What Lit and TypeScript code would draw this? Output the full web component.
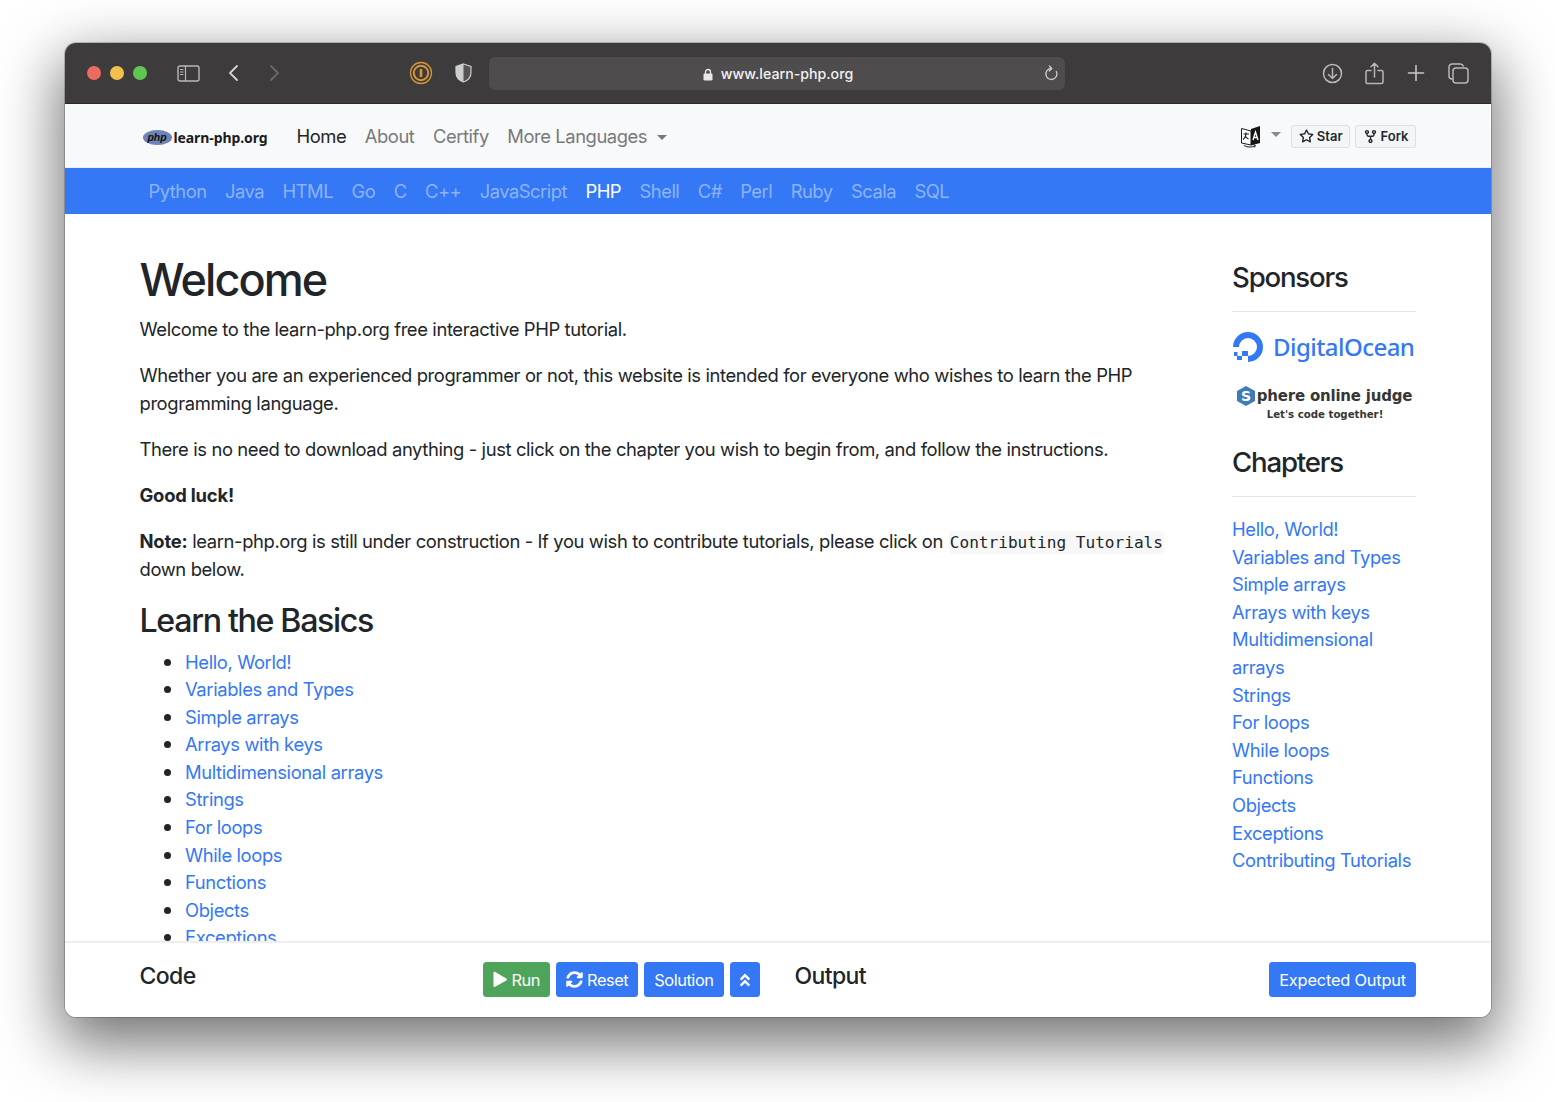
import { LitElement, html, css, svg } from "lit";
import { customElement } from "lit/decorators.js";

const langs = ["Python","Java","HTML","Go","C","C++","JavaScript","PHP","Shell","C#","Perl","Ruby","Scala","SQL"];
const basics = ["Hello, World!","Variables and Types","Simple arrays","Arrays with keys","Multidimensional arrays","Strings","For loops","While loops","Functions","Objects","Exceptions"];
const chapters = ["Hello, World!","Variables and Types","Simple arrays","Arrays with keys","Multidimensional arrays","Strings","For loops","While loops","Functions","Objects","Exceptions","Contributing Tutorials"];

@customElement("app-root")
export class AppRoot extends LitElement {
  static styles = css`
    :host { display: block; width: 1555px; height: 1102px; background: #fff; overflow: hidden;
      font-family: Inter, "Liberation Sans", sans-serif; font-size: 18.4px; line-height: 27.6px; color: #212529; letter-spacing: -0.38px; }
    * { box-sizing: border-box; }
    .stage { padding: 43px 64px 85px 64.5px; height: 1102px; }
    .win { height: 974px; border-radius: 11px; overflow: hidden; display: flex; flex-direction: column; background: #fff;
      box-shadow: 0 22px 60px 6px rgba(0,0,0,.55), 0 0 0 1px rgba(0,0,0,.2); }
    .chrome { flex: none; height: 61px; background: #3d3b3c; display: flex; align-items: center; position: relative; border-bottom: 1px solid #2a292a; }
    .chrome svg { display: block; flex: none; }
    .dots { display: flex; gap: 9px; margin-left: 22px; }
    .dot { width: 14px; height: 14px; border-radius: 50%; }
    .r { background: #ed6a5e; } .y { background: #f5bf4f; } .g { background: #61c554; }
    .side { margin-left: 30px; }
    .back { margin-left: 27px; }
    .fwd { margin-left: 30px; }
    .onep { margin-left: 128px; }
    .shield { margin-left: 22px; }
    .addr { margin-left: 17px; width: 576px; height: 33px; border-radius: 6px; background: #4e4c4d; display: flex; align-items: center; justify-content: center; position: relative;
      color: #f2f2f2; font-size: 14.2px; font-weight: 500; gap: 8px; letter-spacing: 0; padding: 2px 0 0 3px; }
    .reload { position: absolute; right: 6px; top: 8px; }
    .tools { margin-left: auto; display: flex; align-items: center; gap: 22px; margin-right: 22px; }
    .nav { flex: none; height: 64px; background: #f8f9fa; display: flex; align-items: center; padding: 2px 75px 0 78px; border-bottom: 1px solid #e8eef8; letter-spacing: -0.44px; }
    .brand { display: flex; align-items: center; gap: 2px; width: 154px; margin-top: 2px; }
    .oval { width: 29px; height: 15px; border-radius: 50%; background: #6f83b6; color: #111; font-size: 10.5px; font-style: italic; font-weight: 600; line-height: 15px; text-align: center; letter-spacing: 0; font-family: "Liberation Sans", sans-serif; }
    .bname { font-family: "Noto Sans", sans-serif; font-weight: 700; font-size: 14px; letter-spacing: -0.1px; color: #1b1b1b; line-height: 20px; }
    .nl { color: #78797a; margin-right: 18.5px; white-space: nowrap; }
    .nl.on { color: #262626; }
    .caret { display: inline-block; width: 0; height: 0; border-left: 5.5px solid transparent; border-right: 5.5px solid transparent; border-top: 5.5px solid #78797a; margin-left: 10px; vertical-align: 3px; }
    .navr { margin-left: auto; display: flex; align-items: center; margin-top: -1px; }
    .navr .caret { margin: -3px 10px 0 9px; border-top-color: #8a8b8c; }
    .gh { height: 23px; display: flex; align-items: center; gap: 3px; padding: 0 6.5px; font-size: 13px; font-weight: 600; letter-spacing: 0; line-height: 1; color: #24292e; background: #f4f5f7; border: 1px solid #dcdfe3; border-radius: 3px; }
    .gh + .gh { margin-left: 5px; }
    .langs { flex: none; height: 46px; background: #3478f6; display: flex; align-items: center; padding: 1px 0 0 84px; gap: 18.4px; color: #8cb4fb; letter-spacing: -0.5px; }
    .langs .on { color: #fff; }
    .body { flex: 1; min-height: 0; overflow: hidden; display: grid; grid-template-columns: 1fr 184px; column-gap: 64px; padding: 0 75px; align-items: start; }
    h1 { font-size: 45px; line-height: 55.2px; font-weight: 500; margin: 38px 0 9px; letter-spacing: -1.9px; }
    p { margin: 0 0 18.4px; }
    b { font-weight: 700; letter-spacing: -0.2px; }
    code { font-family: "DejaVu Sans Mono", monospace; font-size: 16.1px; background: #f7f7f7; border-radius: 3px; padding: 2px 1px; letter-spacing: 0; margin-left: 1px; }
    h3 { font-size: 32.2px; line-height: 38.6px; font-weight: 500; margin: 0 0 7.6px; letter-spacing: -1.35px; }
    ul { margin: 0; padding: 0 0 0 45.5px; list-style: disc; }
    li::marker { font-family: "DejaVu Sans", sans-serif; font-size: 1.3em; line-height: 1; }
    a { color: #3478f6; text-decoration: none; }
    h4 { font-size: 27.6px; line-height: 33px; font-weight: 500; margin: 0; letter-spacing: -1.2px; }
    aside { padding-top: 47px; }
    hr { border: 0; border-top: 1px solid #e4e4e4; margin: 17px 0 0; }
    .do { display: flex; align-items: center; gap: 9px; margin: 17px 0 0; color: #3478f6; font-size: 24px; line-height: 36px; font-weight: 500; letter-spacing: -0.55px; font-family: "Noto Sans", sans-serif; white-space: nowrap; }
    .do svg { flex: none; }
    .soj { margin: 20px 0 0 2px; text-align: center; width: 180px; font-family: "DejaVu Sans", sans-serif; color: #363636; letter-spacing: 0; white-space: nowrap; }
    .soj1 { display: flex; align-items: center; justify-content: center; font-weight: 700; font-size: 15px; line-height: 22px; letter-spacing: -0.2px; }
    .soj1 svg { flex: none; margin-right: 1px; }
    .soj2 { font-weight: 700; font-size: 10.2px; line-height: 14px; margin: 1px 0 0 2px; }
    .chap { margin: 19px 0 0; padding: 0; list-style: none; }
    .h-ch { margin-top: 24px; }
    .foot { flex: none; height: 76px; border-top: 2px solid #eeeeee; background: #fff; display: grid; grid-template-columns: 655px 1fr; padding: 0 75px; }
    .fl, .fr { display: flex; align-items: flex-start; padding-top: 18px; }
    .foot h4 { font-size: 23px; letter-spacing: -0.6px; line-height: 30px; }
    .btns { display: flex; gap: 6px; margin-left: auto; padding-top: 1px; margin-right: 35px; }
    .btn { height: 35px; border-radius: 3.5px; background: #3478f6; color: #fff; display: flex; align-items: center; gap: 4px; padding: 2px 10px 0; font-size: 16.4px; letter-spacing: -0.45px; white-space: nowrap; }
    .btn.grn { background: #4fa45b; }
    .btn svg { display: block; flex: none; margin-top: -2px; }
    .fr .btn { margin-left: auto; margin-top: 1px; letter-spacing: -0.2px; }
  `;

  private stroke(w: number, h: number, d: unknown, color = "#c9c8c8", sw = 1.6) {
    return html`<svg width=${w} height=${h} viewBox="0 0 ${w} ${h}" fill="none" stroke=${color} stroke-width=${sw} stroke-linecap="round" stroke-linejoin="round">${d}</svg>`;
  }

  render() {
    return html`
    <div class="stage"><div class="win">
      <div class="chrome">
        <div class="dots"><div class="dot r"></div><div class="dot y"></div><div class="dot g"></div></div>
        <div class="side">${this.stroke(23, 17, svg`<rect x="1" y="1" width="21" height="15" rx="2"/><path d="M8.5 1v15M3.5 4.5h2.5M3.5 7h2.5M3.5 9.5h2.5" stroke-width="1.2"/>`, "#b9b8b8", 1.4)}</div>
        <div class="back">${this.stroke(12, 18, svg`<path d="M10 2 3 9l7 7"/>`, "#d4d3d3", 1.8)}</div>
        <div class="fwd">${this.stroke(12, 18, svg`<path d="M2 2l7 7-7 7"/>`, "#6a6869", 1.8)}</div>
        <div class="onep">${this.stroke(24, 24, svg`<circle cx="12" cy="12" r="10.5"/><circle cx="12" cy="12" r="7.2" stroke-width="2"/><path d="M12 8v8" stroke-width="2.6" stroke-linecap="butt"/>`, "#d8943a", 1.3)}</div>
        <div class="shield"><svg width="17" height="20" viewBox="0 0 17 20"><path d="M8.5 1 16 3.5v6c0 5-3.2 8-7.5 9.5C4.2 17.5 1 14.5 1 9.5v-6z" fill="#555354" stroke="#cfcece" stroke-width="1.2"/><path d="M8.5 1 1 3.5v6c0 5 3.2 8 7.5 9.5z" fill="#cfcece"/></svg></div>
        <div class="addr">
          <svg width="10" height="13" viewBox="0 0 10 13"><path d="M2.5 6V4a2.5 2.5 0 0 1 5 0v2" fill="none" stroke="#e8e8e8" stroke-width="1.3"/><rect x="0.5" y="5.5" width="9" height="7" rx="1.3" fill="#e8e8e8"/></svg>
          <span>www.learn-php.org</span>
          <div class="reload">${this.stroke(16, 17, svg`<path d="M13.3 6.5A5.5 5.5 0 1 1 8 3.5"/><path d="M6.3 1 8.8 3.5 6.3 6" stroke-width="1.2"/>`, "#cfcece", 1.3)}</div>
        </div>
        <div class="tools">
          ${this.stroke(21, 21, svg`<circle cx="10.5" cy="10.5" r="9"/><path d="M10.5 5.5v10M6.5 11.5l4 4 4-4"/>`, "#b9b8b8", 1.5)}
          ${this.stroke(19, 23, svg`<path d="M6 8.5H2.5A1.5 1.5 0 0 0 1 10v10a1.5 1.5 0 0 0 1.5 1.5h14a1.5 1.5 0 0 0 1.5-1.5V10a1.5 1.5 0 0 0-1.5-1.5H13M9.5 15V1.5M6 4.8l3.5-3.5L13 4.8"/>`, "#b9b8b8", 1.5)}
          ${this.stroke(20, 20, svg`<path d="M10 2.5v15M2.5 10h15"/>`, "#c9c8c8", 1.6)}
          ${this.stroke(21, 21, svg`<path d="M4.5 16H4a3 3 0 0 1-3-3V4a3 3 0 0 1 3-3h8.5a3 3 0 0 1 2.8 2"/><rect x="5" y="5" width="15" height="15" rx="3"/>`, "#b9b8b8", 1.5)}
        </div>
      </div>
      <div class="nav">
        <div class="brand"><div class="oval">php</div><div class="bname">learn-php.org</div></div>
        <span class="nl on">Home</span><span class="nl">About</span><span class="nl">Certify</span>
        <span class="nl">More Languages<span class="caret"></span></span>
        <div class="navr">
          <svg width="22" height="25" viewBox="0 0 22 25"><path d="M1.5 4.5 11 7v14l-9.5-2z" fill="#fff" stroke="#1a1a1a" stroke-width="1"/><path d="M11 5l9-3v17l-9 2.5z" fill="#161616"/><path d="M3.5 10H9M6 8.5c0 3-1 5.5-3 7M5 12c.8 1.3 2 2.3 3.5 3" fill="none" stroke="#1a1a1a" stroke-width="1.1"/><path d="M13 16 15.5 8l2.5 8M14 13.5h3" fill="none" stroke="#fff" stroke-width="1.4"/><path d="M4 21.5c3 2 8 2 11 .3M13.5 20.5l2 1.2-1.3 1.8" fill="none" stroke="#1a1a1a" stroke-width="1"/></svg>
          <span class="caret"></span>
          <div class="gh"><svg width="15" height="15" viewBox="0 0 16 16" fill="#24292e"><path fill-rule="evenodd" d="M8 .25a.75.75 0 01.673.418l1.882 3.815 4.21.612a.75.75 0 01.416 1.279l-3.046 2.97.719 4.192a.75.75 0 01-1.088.791L8 12.347l-3.766 1.98a.75.75 0 01-1.088-.79l.72-4.194L.818 6.374a.75.75 0 01.416-1.28l4.21-.611L7.327.668A.75.75 0 018 .25zm0 2.445L6.615 5.5a.75.75 0 01-.564.41l-3.097.45 2.24 2.184a.75.75 0 01.216.664l-.528 3.084 2.769-1.456a.75.75 0 01.698 0l2.77 1.456-.53-3.084a.75.75 0 01.216-.664l2.24-2.183-3.096-.45a.75.75 0 01-.564-.41L8 2.694v.001z"/></svg>Star</div>
          <div class="gh"><svg width="15" height="15" viewBox="0 0 16 16" fill="#24292e"><path fill-rule="evenodd" d="M5 3.25a.75.75 0 11-1.5 0 .75.75 0 011.5 0zm0 2.122a2.25 2.25 0 10-1.5 0v.878A2.25 2.25 0 005.75 8.5h1.5v2.128a2.251 2.251 0 101.5 0V8.5h1.5a2.25 2.25 0 002.25-2.25v-.878a2.25 2.25 0 10-1.5 0v.878a.75.75 0 01-.75.75h-4.5A.75.75 0 015 6.25v-.878zm3.75 7.378a.75.75 0 11-1.5 0 .75.75 0 011.5 0zm3-8.75a.75.75 0 100-1.5.75.75 0 000 1.5z"/></svg>Fork</div>
        </div>
      </div>
      <div class="langs">${langs.map((l) => html`<span class=${l === "PHP" ? "on" : ""}>${l}</span>`)}</div>
      <div class="body">
        <main>
          <h1>Welcome</h1>
          <p>Welcome to the learn-php.org free interactive PHP tutorial.</p>
          <p>Whether you are an experienced programmer or not, this website is intended for everyone who wishes to learn the PHP programming language.</p>
          <p>There is no need to download anything - just click on the chapter you wish to begin from, and follow the instructions.</p>
          <p><b>Good luck!</b></p>
          <p><b>Note:</b> learn-php.org is still under construction - If you wish to contribute tutorials, please click on <code>Contributing Tutorials</code> down below.</p>
          <h3>Learn the Basics</h3>
          <ul>${basics.map((b) => html`<li><a>${b}</a></li>`)}</ul>
        </main>
        <aside>
          <h4>Sponsors</h4>
          <hr />
          <div class="do">
            <svg width="32" height="32" viewBox="0 0 32 32" fill="#3478f6"><path d="M16 31v-6a9 9 0 1 0-9-9H1a15 15 0 1 1 15 15z"/><rect x="10" y="20" width="6" height="5"/><rect x="5" y="25" width="5" height="4"/><rect x="2" y="21" width="3.5" height="4"/></svg>
            <span>DigitalOcean</span>
          </div>
          <div class="soj">
            <div class="soj1"><svg width="20" height="22" viewBox="0 0 20 22"><path d="M10 1l9 5v10l-9 5-9-5V6z" fill="#3e7cb8"/><text x="10" y="16" text-anchor="middle" font-size="14" font-weight="700" fill="#fff" font-family="DejaVu Sans, sans-serif">S</text></svg><span>phere online judge</span></div>
            <div class="soj2">Let's code together!</div>
          </div>
          <h4 class="h-ch">Chapters</h4>
          <hr />
          <ul class="chap">${chapters.map((c) => html`<li><a>${c}</a></li>`)}</ul>
        </aside>
      </div>
      <div class="foot">
        <div class="fl"><h4>Code</h4>
          <div class="btns">
            <div class="btn grn"><svg width="14" height="17" viewBox="0 0 15 17" fill="#fff"><path d="M.5 1.5C.5.5 1.5 0 2.3.5l12 6.8c.8.5.8 1.7 0 2.2l-12 6.900c-.8.500-1.800 0-1.800-1z"/></svg>Run</div>
            <div class="btn"><svg width="17" height="17" viewBox="0 0 512 512" fill="#fff"><path d="M370.72 133.28C339.458 104.008 298.888 87.962 255.848 88c-77.458.068-144.328 53.178-162.791 126.85-1.344 5.363-6.122 9.15-11.651 9.15H24.103c-7.498 0-13.194-6.807-11.807-14.176C33.933 94.924 134.813 8 256 8c66.448 0 126.791 26.136 171.315 68.685L463.03 40.97C478.149 25.851 504 36.559 504 57.941V192c0 13.255-10.745 24-24 24H345.941c-21.382 0-32.09-25.851-16.971-40.971l41.75-41.749zM32 296h134.059c21.382 0 32.09 25.851 16.971 40.971l-41.75 41.75c31.262 29.273 71.835 45.319 114.876 45.28 77.418-.07 144.315-53.144 162.787-126.849 1.344-5.363 6.122-9.15 11.651-9.15h57.304c7.498 0 13.194 6.807 11.807 14.176C478.067 417.076 377.187 504 256 504c-66.448 0-126.791-26.136-171.315-68.685L48.97 471.03C33.851 486.149 8 475.441 8 454.059V320c0-13.255 10.745-24 24-24z"/></svg>Reset</div>
            <div class="btn">Solution</div>
            <div class="btn"><svg width="10" height="16" viewBox="0 0 320 512" fill="#fff"><path d="M177 255.7l136 136c9.4 9.4 9.4 24.6 0 33.9l-22.6 22.6c-9.4 9.4-24.6 9.4-33.9 0L160 351.9l-96.4 96.4c-9.4 9.4-24.6 9.4-33.9 0L7 425.7c-9.4-9.4-9.4-24.6 0-33.9l136-136c9.4-9.5 24.6-9.5 34-.1zm-34-192L7 199.7c-9.4 9.4-9.4 24.6 0 33.9l22.6 22.6c9.4 9.4 24.6 9.4 33.9 0l96.4-96.4 96.4 96.4c9.4 9.4 24.6 9.4 33.9 0l22.6-22.6c9.4-9.4 9.4-24.6 0-33.9l-136-136c-9.2-9.4-24.4-9.4-33.8 0z"/></svg></div>
          </div>
        </div>
        <div class="fr"><h4>Output</h4><div class="btn">Expected Output</div></div>
      </div>
    </div></div>`;
  }
}
